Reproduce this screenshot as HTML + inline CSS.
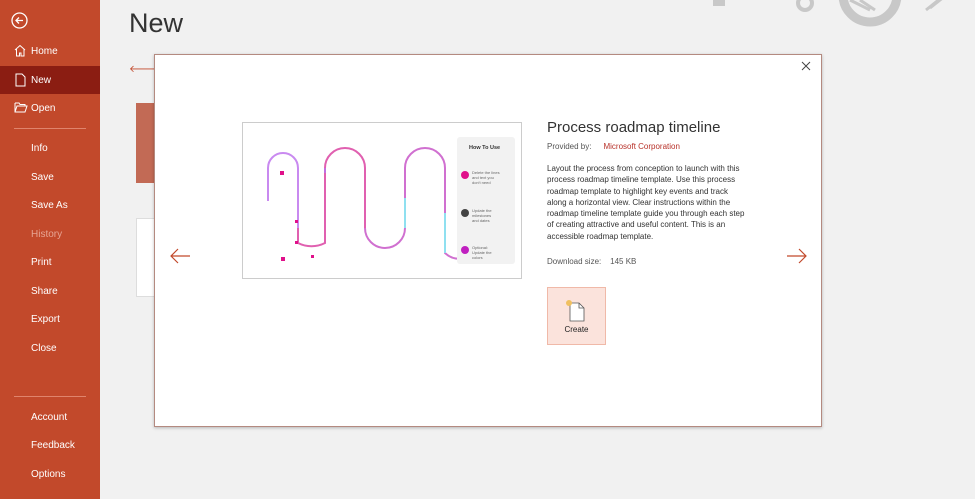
<!DOCTYPE html>
<html><head><meta charset="utf-8"><style>
*{margin:0;padding:0;box-sizing:border-box}
body{width:975px;height:499px;overflow:hidden;background:#f1f1f1;font-family:"Liberation Sans",sans-serif;position:relative}
.side{position:absolute;left:0;top:0;width:100px;height:499px;background:#c2492b;color:#fff;font-size:10px}
.side div.i{position:absolute;left:31px}
.sel{position:absolute;left:0;top:66px;width:100px;height:28px;background:#8b1d12}
.hr{position:absolute;left:14px;width:72px;height:1px;background:#e0846c}
.modal{position:absolute;left:154px;top:54px;width:668px;height:373px;background:#fff;border:1px solid #b48a80;box-shadow:0 1px 3px rgba(0,0,0,.25)}
</style></head><body>
<div class="side">
<svg style="position:absolute;left:11px;top:12px" width="17" height="17"><circle cx="8.5" cy="8.5" r="7.5" fill="none" stroke="#fff" stroke-width="1.3"/><path d="M12 8.5H5M8 5.5L5 8.5 8 11.5" fill="none" stroke="#fff" stroke-width="1.3"/></svg>
<div class="sel"></div>
<svg style="position:absolute;left:14px;top:44px" width="12" height="13"><path d="M1 6L6 1.5 11 6M2.5 5v7h3V9h1.5v3h3V5" fill="none" stroke="#fff"/></svg>
<div class="i" style="top:46px">Home</div>
<svg style="position:absolute;left:15px;top:73px" width="11" height="14"><path d="M1 1h6l3 3v9H1z" fill="none" stroke="#fff"/></svg>
<div class="i" style="top:75px">New</div>
<svg style="position:absolute;left:14px;top:102px" width="14" height="11"><path d="M1 1h4l1 1.5h5V4M1 1v9h10l2-6H3L1 10" fill="none" stroke="#fff"/></svg>
<div class="i" style="top:103px">Open</div>
<div class="hr" style="top:128px"></div>
<div class="i" style="top:143px">Info</div>
<div class="i" style="top:172px">Save</div>
<div class="i" style="top:200px">Save As</div>
<div class="i" style="top:229px;color:#e6a493">History</div>
<div class="i" style="top:257px">Print</div>
<div class="i" style="top:286px">Share</div>
<div class="i" style="top:314px">Export</div>
<div class="i" style="top:343px">Close</div>
<div class="hr" style="top:396px"></div>
<div class="i" style="top:412px">Account</div>
<div class="i" style="top:440px">Feedback</div>
<div class="i" style="top:469px">Options</div>
</div>
<div style="position:absolute;left:129px;top:8px;font-size:27px;color:#333">New</div>
<div style="position:absolute;left:129px;top:63px;color:#c2492b;font-size:10px">🡐 Ba</div>
<div style="position:absolute;left:136px;top:103px;width:20px;height:80px;background:#c26a55"></div>
<div style="position:absolute;left:136px;top:218px;width:20px;height:79px;background:#fff;border:1px solid #ddd"></div>
<svg style="position:absolute;left:640px;top:0" width="335" height="30"><circle cx="165" cy="3" r="7" fill="none" stroke="#c8c8c8" stroke-width="4"/><circle cx="230" cy="-5" r="27" fill="none" stroke="#c8c8c8" stroke-width="9"/><path d="M210 0l20 10M220 0l15 10M286 10l15-12M290 8l15-12" stroke="#c8c8c8" stroke-width="3"/><rect x="73" y="0" width="12" height="6" fill="#c8c8c8"/></svg>
<div class="modal">
<svg style="position:absolute;left:646px;top:6px" width="10" height="10"><path d="M1 1l8 8M9 1l-8 8" stroke="#444" stroke-width="1"/></svg>
<svg style="position:absolute;left:14px;top:193px" width="22" height="16"><path d="M21 8H2M9 1L2 8l7 7" fill="none" stroke="#c2492b" stroke-width="1.2"/></svg>
<svg style="position:absolute;left:631px;top:193px" width="22" height="16"><path d="M1 8h19M13 1l7 7-7 7" fill="none" stroke="#c2492b" stroke-width="1.2"/></svg>
<div style="position:absolute;left:87px;top:67px;width:280px;height:157px;border:1px solid #ccc;background:#fff">
<svg width="278" height="155" style="position:absolute;left:0;top:0">
<g fill="none" stroke-width="2">
<path d="M25 78V45a15 15 0 0 1 30 0v60" stroke="#c98af0"/>
<path d="M55 105v15a30 30 0 0 0 27 0V45a20 20 0 0 1 40 0v60" stroke="#e060b0"/>
<path d="M82 50V45" stroke="#c070e0"/>
<path d="M122 105a20 20 0 0 0 40 0V45a20 20 0 0 1 40 0v85a20 20 0 0 0 28 0" stroke="#d070d0"/>
<path d="M162 75v30M202 90v40" stroke="#8fe0f0"/>
</g>
<g fill="#e0108a"><rect x="37" y="48" width="4" height="4"/><rect x="52" y="97" width="3" height="3"/><rect x="52" y="118" width="3" height="3"/><rect x="68" y="132" width="3" height="3"/><rect x="38" y="134" width="4" height="4"/></g>
<rect x="214" y="14" width="58" height="127" rx="3" fill="#f2f2f2"/>
<text x="226" y="26" font-size="5.5" font-weight="bold" fill="#333" font-family="Liberation Sans">How To Use</text>
<circle cx="222" cy="52" r="4" fill="#e0108a"/><circle cx="222" cy="90" r="4" fill="#444"/><circle cx="222" cy="127" r="4" fill="#c020c0"/>
<g font-size="4" fill="#666" font-family="Liberation Sans"><text x="229" y="51">Delete the lines</text><text x="229" y="56">and text you</text><text x="229" y="61">don't need</text><text x="229" y="89">Update the</text><text x="229" y="94">milestones</text><text x="229" y="99">and dates</text><text x="229" y="126">Optional:</text><text x="229" y="131">Update the</text><text x="229" y="136">colors</text></g>
</svg></div>
<div style="position:absolute;left:392px;top:64px;font-size:15px;color:#333">Process roadmap timeline</div>
<div style="position:absolute;left:392px;top:87px;font-size:8px;color:#555">Provided by:<span style="color:#b8322a;margin-left:12px">Microsoft Corporation</span></div>
<div style="position:absolute;left:392px;top:108px;width:202px;font-size:8px;line-height:11.3px;color:#333">Layout the process from conception to launch with this process roadmap timeline template. Use this process roadmap template to highlight key events and track along a horizontal view. Clear instructions within the roadmap timeline template guide you through each step of creating attractive and useful content. This is an accessible roadmap template.</div>
<div style="position:absolute;left:392px;top:202px;font-size:8px;color:#555">Download size:&nbsp;&nbsp;&nbsp;&nbsp;145 KB</div>
<div style="position:absolute;left:392px;top:232px;width:59px;height:58px;background:#fbe3dc;border:1px solid #f0b9a8">
<svg style="position:absolute;left:16px;top:10px" width="24" height="24"><path d="M6 5h9l5 5v13H6z" fill="#fff" stroke="#555" stroke-width=".8"/><path d="M15 5v5h5" fill="none" stroke="#555" stroke-width=".8"/><circle cx="5" cy="5" r="3" fill="#f0c060"/></svg>
<div style="position:absolute;left:0;width:57px;top:37px;text-align:center;font-size:8px;color:#222">Create</div>
</div>
</div>
</body></html>
